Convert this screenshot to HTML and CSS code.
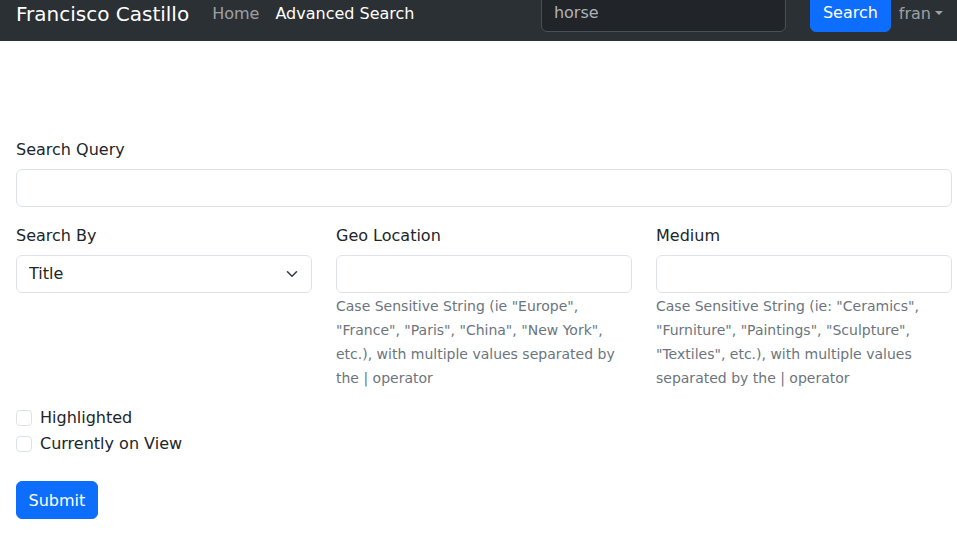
FILE: index.html
```html
<!DOCTYPE html>
<html lang="en">
<head>
<meta charset="UTF-8">
<title>Advanced Search</title>
<link rel="stylesheet" href="styles.css">
</head>
<body>
<nav class="navbar">
<a class="brand" href="#">Francisco Castillo</a>
<a class="nav-link" href="#">Home</a>
<a class="nav-link active" href="#">Advanced Search</a>
<form class="search-form">
<input class="search-input" type="search" value="horse">
<button class="btn" type="button">Search</button>
</form>
<a class="nav-link user" href="#">fran<span class="caret"></span></a>
</nav>

<div class="container">
<form>
<div class="field">
<label class="label" for="q">Search Query</label>
<input class="control" id="q" type="text">
</div>

<div class="row">
<div class="col">
<label class="label" for="by">Search By</label>
<div class="select-wrap">
<select class="control select" id="by">
<option>Title</option>
<option>Artist or Culture</option>
<option>Tags</option>
</select>
<svg class="chevron" width="16" height="12" viewBox="0 0 16 16"><path d="m2 5 6 6 6-6" fill="none" stroke="#343a40" stroke-width="2" stroke-linecap="round" stroke-linejoin="round"/></svg>
</div>
</div>
<div class="col">
<label class="label" for="geo">Geo Location</label>
<input class="control" id="geo" type="text">
<div class="help">Case Sensitive String (ie "Europe", "France", "Paris", "China", "New York", etc.), with multiple values separated by the | operator</div>
</div>
<div class="col">
<label class="label" for="medium">Medium</label>
<input class="control" id="medium" type="text">
<div class="help">Case Sensitive String (ie: "Ceramics", "Furniture", "Paintings", "Sculpture", "Textiles", etc.), with multiple values separated by the | operator</div>
</div>
</div>

<div class="check">
<input class="check-box" id="hl" type="checkbox">
<label for="hl">Highlighted</label>
</div>
<div class="check">
<input class="check-box" id="ov" type="checkbox">
<label for="ov">Currently on View</label>
</div>

<button class="btn submit" type="submit">Submit</button>
</form>
</div>
</body>
</html>
```

FILE: styles.css
```css
* {
box-sizing: border-box;
}

body {
margin: 0;
font-family: "DejaVu Sans", sans-serif;
font-size: 16px;
line-height: 24px;
color: #212529;
background-color: #fff;
}

/* top bar */
.navbar {
display: flex;
align-items: center;
height: 41px;
padding: 0 6px 15px 16px;
background-color: #2b3035;
overflow: hidden;
}

.brand {
padding-top: 1px;
font-size: 20px;
line-height: 30px;
color: #fff;
text-decoration: none;
margin-right: 15px;
}

.nav-link {
padding: 9px 8px 7px;
color: rgba(255, 255, 255, 0.55);
text-decoration: none;
}

.nav-link.active {
color: #fff;
}

.search-form {
display: flex;
margin-left: auto;
gap: 24px;
}

.search-input {
width: 245px;
height: 38px;
padding: 5px 12px 7px;
font: inherit;
color: #aeb3b8;
background-color: #212529;
border: 1px solid #495057;
border-radius: 6px;
}

.btn {
height: 38px;
padding: 6px 12px;
font: inherit;
color: #fff;
background-color: #0d6efd;
border: 1px solid #0d6efd;
border-radius: 6px;
cursor: pointer;
}

.user {
padding-right: 8px;
}

.caret {
display: inline-block;
margin-left: 4px;
vertical-align: 4px;
border-top: 4px solid;
border-left: 4px solid transparent;
border-right: 4px solid transparent;
}

/* form */
.container {
margin: 0 5px 0 16px;
padding-top: 97px;
}

.label {
display: block;
margin-bottom: 7px;
}

.field {
margin-bottom: 17px;
}

.control {
display: block;
width: 100%;
height: 38px;
padding: 6px 12px;
font: inherit;
color: #212529;
background-color: #fff;
border: 1px solid #dee2e6;
border-radius: 6px;
}

.row {
display: grid;
grid-template-columns: repeat(3, 1fr);
gap: 24px;
margin-bottom: 16px;
}

.select-wrap {
position: relative;
}

.select {
appearance: none;
padding-right: 36px;
}

.chevron {
position: absolute;
right: 12px;
top: 13px;
pointer-events: none;
}

.help {
margin-top: 1px;
font-size: 14px;
line-height: 24px;
color: #6c757d;
}

.check {
display: flex;
align-items: center;
gap: 8px;
margin-bottom: 2px;
}

.check-box {
appearance: none;
width: 16px;
height: 16px;
margin: 0;
border: 1px solid #dee2e6;
border-radius: 4px;
background-color: #fff;
}

.submit {
margin-top: 23px;
padding: 6px 11.5px 5px;
}
```
